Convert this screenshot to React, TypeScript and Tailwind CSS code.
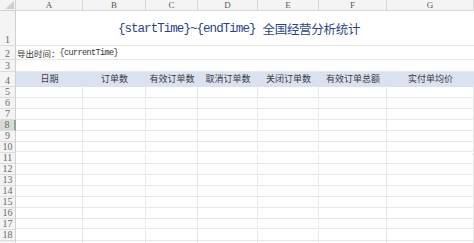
import React from "react";

const cols = ["A", "B", "C", "D", "E", "F", "G"];
const headers = ["日期", "订单数", "有效订单数", "取消订单数", "关闭订单数", "有效订单总额", "实付单均价"];
const serif = { fontFamily: '"Liberation Serif", "Noto Sans CJK SC", serif' };
const cjk = '"Noto Sans CJK SC", sans-serif';

type RowSpec = { n: number; h: string };
const bodyRows: RowSpec[] = [
  { n: 5, h: "h-[11px]" },
  { n: 6, h: "h-[11px]" },
  { n: 7, h: "h-[11px]" },
  { n: 8, h: "h-[11px]" },
  { n: 9, h: "h-[11px]" },
  { n: 10, h: "h-[10px]" },
  { n: 11, h: "h-[11px]" },
  { n: 12, h: "h-[11px]" },
  { n: 13, h: "h-[11px]" },
  { n: 14, h: "h-[11px]" },
  { n: 15, h: "h-[11px]" },
  { n: 16, h: "h-[11px]" },
  { n: 17, h: "h-[10px]" },
  { n: 18, h: "h-[11px]" },
  { n: 19, h: "h-[11px]" },
];

function RowHead({ n, selected, hideLabel }: { n: number; selected?: boolean; hideLabel?: boolean }) {
  return (
    <div
      className={
        "flex items-end justify-center box-border border-b border-[#dcdcdc] text-[10px] leading-[10px] text-[#6a6a6a] " +
        (selected ? "bg-[#d5dbd5] border-r-2 border-r-[#8fa898]" : "bg-[#f4f4f4] border-r border-r-[#d0d0d0]")
      }
      style={serif}
    >
      {!hideLabel && <span>{n}</span>}
    </div>
  );
}

export default function App() {
  return (
    <div className="w-[474px] h-[243px] overflow-hidden bg-white">
      <div className="grid grid-cols-[16px_67px_63px_52px_60px_61px_68px_1fr]">
        {/* column header strip */}
        <div className="h-[11px] box-border bg-[#f4f4f4] border-b border-r border-[#d0d0d0] relative">
          <svg className="absolute right-[1px] bottom-[1px]" width="9" height="8" viewBox="0 0 9 8">
            <polygon points="9,0 9,8 0,8" fill="#cfcfcf" />
          </svg>
        </div>
        {cols.map((c) => (
          <div
            key={c}
            className="h-[11px] box-border bg-[#f4f4f4] border-b border-r border-[#d6d6d6] flex items-center justify-center text-[9px] leading-[9px] text-[#5a5a5a]"
            style={serif}
          >
            {c}
          </div>
        ))}

        {/* row 1: title */}
        <RowHead n={1} />
        <div className="col-span-7 h-[35px] box-border border-b border-[#e8e8e8] flex items-center justify-center pr-[12px] pt-[2px] text-[#2a4386]">
          <span
            className="text-[12.5px] tracking-[-0.95px]"
            style={{ fontFamily: '"Liberation Mono", monospace' }}
          >
            {"{startTime}~{endTime}"}
          </span>
          <span
            className="ml-[7px] text-[12.5px] tracking-[-0.3px] font-normal"
            style={{ fontFamily: cjk }}
          >
            全国经营分析统计
          </span>
        </div>

        {/* row 2 */}
        <RowHead n={2} />
        <div className="col-span-7 h-[14px] box-border border-b border-[#e8e8e8] flex items-center pl-[1px] pt-[1px] text-[#333]">
          <span className="text-[8.5px] leading-[10px]" style={{ fontFamily: cjk }}>
            导出时间：
          </span>
          <span
            className="text-[8.5px] leading-[10px] tracking-[-0.6px]"
            style={{ fontFamily: '"Liberation Mono", monospace' }}
          >
            {"{currentTime}"}
          </span>
        </div>

        {/* row 3 */}
        <RowHead n={3} />
        <div className="col-span-7 h-[12px] box-border border-b border-[#e8e8e8]" />

        {/* row 4: headers */}
        <RowHead n={4} />
        {headers.map((h) => (
          <div
            key={h}
            className="h-[15px] box-border bg-[#dae2f2] border-b border-[#dae2f2] flex items-center justify-center text-[9px] text-[#3a3a3a]"
            style={{ fontFamily: cjk }}
          >
            {h}
          </div>
        ))}

        {/* body rows */}
        {bodyRows.map((r) => (
          <React.Fragment key={r.n}>
            <RowHead n={r.n} selected={r.n === 8} hideLabel={r.n === 19} />
            {cols.map((c) => (
              <div key={c} className={r.h + " box-border border-b border-r border-[#e8e8e8]"} />
            ))}
          </React.Fragment>
        ))}
      </div>
    </div>
  );
}
